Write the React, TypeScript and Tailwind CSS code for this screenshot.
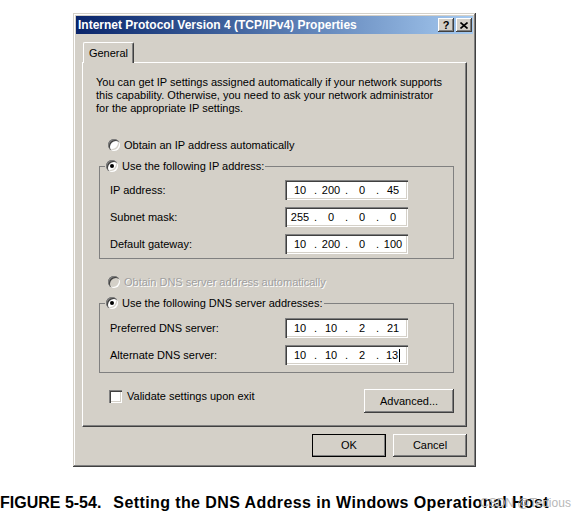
import { ReactNode } from 'react';

const ui = "font-['Liberation_Sans',Arial,sans-serif] text-[11px] text-black";
const raised = 'bg-[#d4d0c8] shadow-[inset_-1px_-1px_0_#404040,inset_1px_1px_0_#fff,inset_-2px_-2px_0_#808080]';
const sunken = 'bg-white shadow-[inset_1px_1px_0_#808080,inset_2px_2px_0_#404040,inset_-1px_-1px_0_#fff,inset_-2px_-2px_0_#d4d0c8]';

function Radio({ checked, disabled }: { checked?: boolean; disabled?: boolean }) {
  return (
    <span
      className={`flex h-[12px] w-[12px] shrink-0 items-center justify-center rounded-full shadow-[inset_1px_1px_0_#808080,inset_2px_2px_0_#404040,inset_-1px_-1px_0_#fff,inset_-2px_-2px_0_#d4d0c8] ${
        disabled ? 'bg-[#d4d0c8]' : 'bg-white'
      }`}
    >
      {checked && <span className="h-[4px] w-[4px] rounded-full bg-black" />}
    </span>
  );
}

function TitleBtn({ children }: { children: ReactNode }) {
  return <div className={`flex h-[14px] w-[16px] items-center justify-center ${raised}`}>{children}</div>;
}

function IpField({ parts, caret }: { parts: string[]; caret?: boolean }) {
  return (
    <div className={`flex h-[20px] w-[123px] items-center pl-[3px] ${sunken}`}>
      {parts.map((p, i) => (
        <div key={i} className="flex items-center">
          {i > 0 && <span className="w-[7px] text-center">.</span>}
          <span className="flex w-[24px] items-center justify-center">
            {p}
            {caret && i === 3 && <span className="ml-px inline-block h-[13px] w-px bg-black" />}
          </span>
        </div>
      ))}
    </div>
  );
}

function Row({ label, parts, caret }: { label: string; parts: string[]; caret?: boolean }) {
  return (
    <div className="flex h-[20px] items-center pl-[10px]">
      <span className="w-[175px]">{label}</span>
      <IpField parts={parts} caret={caret} />
    </div>
  );
}

function Button({ children, isDefault, className }: { children: ReactNode; isDefault?: boolean; className: string }) {
  return (
    <div
      className={`flex items-center justify-center ${raised} ${
        isDefault ? 'outline outline-1 outline-black -outline-offset-1' : ''
      } ${className}`}
    >
      {children}
    </div>
  );
}

export default function App() {
  return (
    <div className="relative h-[518px] w-[573px] overflow-hidden bg-white">
      <div
        className={`ml-[73px] mt-[13px] flex h-[454px] w-[403px] flex-col bg-[#d4d0c8] p-[3px] shadow-[inset_-1px_-1px_0_#404040,inset_1px_1px_0_#d4d0c8,inset_-2px_-2px_0_#808080,inset_2px_2px_0_#fff] ${ui}`}
      >
        {/* title bar */}
        <div className="flex h-[18px] items-center justify-between bg-linear-to-r from-[#0a246a] to-[#a6caf0] pl-[2px] pr-[1px]">
          <span className="text-[12px] font-bold text-white">Internet Protocol Version 4 (TCP/IPv4) Properties</span>
          <div className="flex gap-[2px]">
            <TitleBtn>
              <span className="text-[11px] font-bold leading-none">?</span>
            </TitleBtn>
            <TitleBtn>
              <svg width="8" height="7" viewBox="0 0 8 7">
                <path d="M0.5 0.5 L7.5 6.5 M7.5 0.5 L0.5 6.5" stroke="#000" strokeWidth="1.6" />
              </svg>
            </TitleBtn>
          </div>
        </div>

        <div className="mx-[6px] mt-[8px] flex flex-col">
          {/* tab */}
          <div className="relative z-10 mb-[-1px] ml-px flex h-[21px] w-[51px] items-center justify-center rounded-t-[2px] border-l border-t border-r border-l-white border-t-white border-r-[#404040] bg-[#d4d0c8] shadow-[inset_-1px_0_0_#808080]">
            General
          </div>

          {/* panel */}
          <div className="flex h-[365px] w-[385px] flex-col border border-b-[#404040] border-l-white border-r-[#404040] border-t-white shadow-[inset_-1px_-1px_0_#808080]">
            <p className="ml-[13px] mt-[13px] whitespace-nowrap leading-[13px]">
              You can get IP settings assigned automatically if your network supports
              <br />
              this capability. Otherwise, you need to ask your network administrator
              <br />
              for the appropriate IP settings.
            </p>

            <div className="ml-[25px] mt-[22px] flex h-[16px] items-center gap-[4px]">
              <Radio />
              <span>Obtain an IP address automatically</span>
            </div>

            <fieldset className="ml-[16px] mt-[5px] w-[355px] border border-[#808080] pb-[4px]">
              <legend className="ml-[5px] px-px">
                <span className="flex h-[16px] items-center gap-[4px]">
                  <Radio checked />
                  <span>Use the following IP address:</span>
                </span>
              </legend>
              <div className="mt-[6px] flex flex-col gap-[7px]">
                <Row label="IP address:" parts={['10', '200', '0', '45']} />
                <Row label="Subnet mask:" parts={['255', '0', '0', '0']} />
                <Row label="Default gateway:" parts={['10', '200', '0', '100']} />
              </div>
            </fieldset>

            <div className="ml-[25px] mt-[15px] flex h-[16px] items-center gap-[4px]">
              <Radio disabled />
              <span className="text-[#a0a0a0] [text-shadow:1px_1px_0_#fff]">Obtain DNS server address automatically</span>
            </div>

            <fieldset className="ml-[16px] mt-[5px] w-[355px] border border-[#808080] pb-[7px]">
              <legend className="ml-[5px] px-px">
                <span className="flex h-[16px] items-center gap-[4px]">
                  <Radio checked />
                  <span>Use the following DNS server addresses:</span>
                </span>
              </legend>
              <div className="mt-[7px] flex flex-col gap-[7px]">
                <Row label="Preferred DNS server:" parts={['10', '10', '2', '21']} />
                <Row label="Alternate DNS server:" parts={['10', '10', '2', '13']} caret />
              </div>
            </fieldset>

            <div className="mr-[12px] mt-[15px] flex items-start justify-between">
              <div className="ml-[26px] mt-[1px] flex h-[14px] items-center gap-[5px]">
                <span className={`h-[13px] w-[13px] ${sunken}`} />
                <span>Validate settings upon exit</span>
              </div>
              <Button className="mt-px h-[24px] w-[90px]">Advanced...</Button>
            </div>
          </div>

          <div className="mt-[7px] flex justify-end gap-[7px]">
            <Button isDefault className="h-[23px] w-[74px]">
              OK
            </Button>
            <Button className="h-[23px] w-[74px]">Cancel</Button>
          </div>
        </div>
      </div>

      <div className="mt-[27px] flex whitespace-nowrap font-['Liberation_Sans',Arial,sans-serif] text-[16px] font-bold leading-[18px] text-black">
        <span>FIGURE 5-54.</span>
        <span className="ml-[12px] tracking-[0.4px]">Setting the DNS Address in Windows Operational Host</span>
      </div>
      <span className="absolute left-[480px] top-[494px] font-['Liberation_Sans',Arial,sans-serif] text-[12px] text-[#b8b8b8]">
        CSDN @Tedious
      </span>
    </div>
  );
}
